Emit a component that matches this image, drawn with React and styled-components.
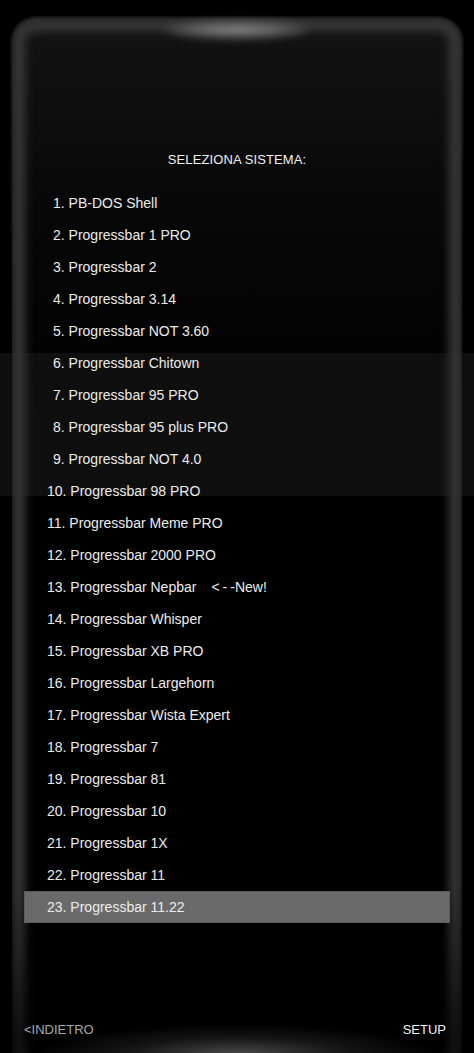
import React from 'react'
import styled, { createGlobalStyle } from 'styled-components'

const GlobalStyle = createGlobalStyle`
    html, body {
        margin: 0;
        padding: 0;
        background: #000;
    }
    body {
        font-family: "Liberation Sans", Arial, sans-serif;
    }
`

const Screen = styled.div`
    width: 474px;
    height: 1053px;
    overflow: hidden;
    padding-top: 16px;
    box-sizing: border-box;
    background: linear-gradient(
        to bottom,
        #000 353px,
        #0f0f0f 353px,
        #0f0f0f 496px,
        #000 496px
    );
`

const Frame = styled.div`
    position: relative;
    margin: 0 10px;
    height: 1060px;
    border-radius: 26px 26px 0 0;
    background: linear-gradient(to bottom, rgba(28,28,28,0.7) 0px, rgba(14,14,14,0.5) 200px, rgba(0,0,0,0) 420px);

    &::before {
        content: "";
        position: absolute;
        inset: 2px;
        border: 13px solid #383838;
        border-radius: 24px;
        filter: blur(5px);
        -webkit-mask-image: linear-gradient(to bottom, #000 82%, rgba(0,0,0,0.35) 96%);
        mask-image: linear-gradient(to bottom, #000 82%, rgba(0,0,0,0.35) 96%);
        pointer-events: none;
    }

    &::after {
        content: "";
        position: absolute;
        top: 5px;
        left: 155px;
        width: 144px;
        height: 18px;
        border-radius: 50%;
        background: radial-gradient(ellipse at center, #8c8c8c 0%, rgba(115,115,115,0.75) 45%, rgba(60,60,60,0) 85%);
        filter: blur(4px);
        pointer-events: none;
    }
`

const Content = styled.div`
    position: relative;
    z-index: 1;
    padding: 134px 14px 0;
    display: flex;
    flex-direction: column;
`

const Title = styled.h1`
    margin: 0 0 17px;
    height: 20px;
    line-height: 20px;
    text-align: center;
    font-size: 13px;
    font-weight: normal;
    color: #f0f0f0;
    letter-spacing: 0.1px;
`

const List = styled.ul`
    list-style: none;
    margin: 0;
    padding: 0;
`

const Item = styled.li`
    height: 32px;
    line-height: 32px;
    padding-left: ${p => (p.$wide ? 23 : 29)}px;
    font-size: 14px;
    color: #ececec;
    background: ${p => (p.$selected ? '#6a6a6a' : 'transparent')};
    box-shadow: ${p => (p.$selected ? 'inset 0 0 0 1px #5c5c5c' : 'none')};
    white-space: nowrap;
`

const Tag = styled.span`
    margin-left: 15px;
`

const Arrow = styled.span`
    letter-spacing: 3px;
`

const Footer = styled.div`
    margin: 97px -14px 0;
    padding: 0 18px 0 14px;
    height: 34px;
    display: flex;
    justify-content: space-between;
    align-items: flex-start;
    font-size: 13px;
    line-height: 20px;
    background: radial-gradient(ellipse 200px 30px at 50% 100%, rgba(85,85,85,0.85), rgba(45,45,45,0.45) 55%, rgba(0,0,0,0) 100%);
`

const Back = styled.span`
    color: #a8a8a8;
`

const Setup = styled.span`
    color: #f2f2f2;
`

const systems = [
    'PB-DOS Shell',
    'Progressbar 1 PRO',
    'Progressbar 2',
    'Progressbar 3.14',
    'Progressbar NOT 3.60',
    'Progressbar Chitown',
    'Progressbar 95 PRO',
    'Progressbar 95 plus PRO',
    'Progressbar NOT 4.0',
    'Progressbar 98 PRO',
    'Progressbar Meme PRO',
    'Progressbar 2000 PRO',
    'Progressbar Nepbar',
    'Progressbar Whisper',
    'Progressbar XB PRO',
    'Progressbar Largehorn',
    'Progressbar Wista Expert',
    'Progressbar 7',
    'Progressbar 81',
    'Progressbar 10',
    'Progressbar 1X',
    'Progressbar 11',
    'Progressbar 11.22',
]

const App = () => {
    const selected = systems.length - 1

    return (
        <Screen>
            <GlobalStyle />
            <Frame>
                <Content>
                    <Title>SELEZIONA SISTEMA:</Title>
                    <List>
                        {systems.map((name, i) => (
                            <Item key={name} $wide={i >= 9} $selected={i === selected}>
                                {i + 1}. {name}
                                {name === 'Progressbar Nepbar' && (
                                    <Tag><Arrow>&lt;-</Arrow>-New!</Tag>
                                )}
                            </Item>
                        ))}
                    </List>
                    <Footer>
                        <Back>&lt;INDIETRO</Back>
                        <Setup>SETUP</Setup>
                    </Footer>
                </Content>
            </Frame>
        </Screen>
    )
}

export default App
